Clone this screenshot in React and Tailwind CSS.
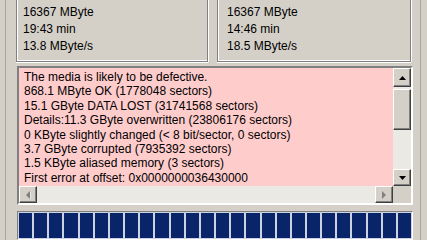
import React from 'react';

const raised =
  'border border-t-white border-l-white border-r-[#404040] border-b-[#404040] shadow-[inset_-1px_-1px_0_#808080] bg-[#d4d0c8]';

const ArrowUp = ({ color = '#000' }) => (
  <svg width="7" height="4" viewBox="0 0 7 4"><path d="M3.5 0 L7 4 L0 4 Z" fill={color} /></svg>
);
const ArrowDown = ({ color = '#000' }) => (
  <svg width="7" height="4" viewBox="0 0 7 4"><path d="M0 0 L7 0 L3.5 4 Z" fill={color} /></svg>
);
const ArrowLeft = () => (
  <svg width="5" height="8" viewBox="0 0 5 8">
    <path d="M4 0 L4 8 L0 4 Z" fill="#808080" />
    <path d="M5 1 L5 9" stroke="#fff" strokeWidth="1" />
  </svg>
);
const ArrowRight = () => (
  <svg width="5" height="8" viewBox="0 0 5 8">
    <path d="M0 0 L0 8 L4 4 Z" fill="#808080" />
  </svg>
);

const StatBox = ({ lines, className }) => (
  <div className={`h-[62px] border-l border-r border-b border-l-[#808080] border-b-[#808080] border-r-[#808080] shadow-[inset_1px_0_0_#fff,1px_0_0_#fff,0_1px_0_#fff,inset_0_-1px_0_#fff] pt-[4px] ${className}`}>
    {lines.map((l) => (
      <div key={l} className="leading-[17px]">{l}</div>
    ))}
  </div>
);

const logLines = [
  'The media is likely to be defective.',
  '868.1 MByte OK (1778048 sectors)',
  '15.1 GByte DATA LOST (31741568 sectors)',
  'Details:11.3 GByte overwritten (23806176 sectors)',
  '0 KByte slightly changed (< 8 bit/sector, 0 sectors)',
  '3.7 GByte corrupted (7935392 sectors)',
  '1.5 KByte aliased memory (3 sectors)',
  'First error at offset: 0x0000000036430000',
];

export default function App() {
  return (
    <div className="w-[427px] h-[240px] bg-[#d4d0c8] overflow-hidden font-['Liberation_Sans',sans-serif] text-[12px] text-black">
      <div className="ml-[5px] w-[416px] h-full border-l border-r border-[#a9a69f] flex flex-col pl-[10px]">
        {/* stat boxes */}
        <div className="flex gap-[9px]">
          <StatBox className="w-[192px] pl-[6px]" lines={['16367 MByte', '19:43 min', '13.8 MByte/s']} />
          <StatBox className="w-[194px] pl-[9px]" lines={['16367 MByte', '14:46 min', '18.5 MByte/s']} />
        </div>

        {/* log box */}
        <div className="mt-[4px] ml-[1px] w-[396px] h-[139px] border-2 border-t-[#808080] border-l-[#808080] border-b-white border-r-white shadow-[inset_1px_1px_0_#404040] flex flex-col">
          <div className="flex flex-1 min-h-0">
            <div className="flex-1 bg-[#ffcccc] pl-[5px] pt-[2px] overflow-hidden whitespace-nowrap">
              {logLines.map((l) => (
                <div key={l} className="leading-[14.4px]">{l}</div>
              ))}
            </div>
            <div className="w-[18px] flex flex-col bg-[#ebe9e4]">
              <div className={`h-[19px] flex items-center justify-center ${raised}`}><ArrowUp /></div>
              <div className={`mt-[2px] h-[41px] ${raised}`} />
              <div className="flex-1" />
              <div className={`h-[17px] flex items-center justify-center ${raised}`}><ArrowDown /></div>
            </div>
          </div>
          <div className="h-[17px] flex bg-[#ebe9e4]">
            <div className={`w-[18px] flex items-center justify-center ${raised}`}><ArrowLeft /></div>
            <div className="flex-1" />
            <div className={`w-[18px] flex items-center justify-center ${raised}`}><ArrowRight /></div>
            <div className="w-[18px] bg-[#d4d0c8]" />
          </div>
        </div>

        {/* progress bar */}
        <div className="mt-[6px] ml-[1px] w-[396px] h-[29px] border border-t-[#808080] border-l-[#808080] border-b-white border-r-white bg-[#cdd2e2] p-[1px] flex gap-[2px]">
          {Array.from({ length: 26 }).map((_, i) => (
            <div key={i} className="flex-1 bg-[#0a246a]" />
          ))}
        </div>
      </div>
    </div>
  );
}
